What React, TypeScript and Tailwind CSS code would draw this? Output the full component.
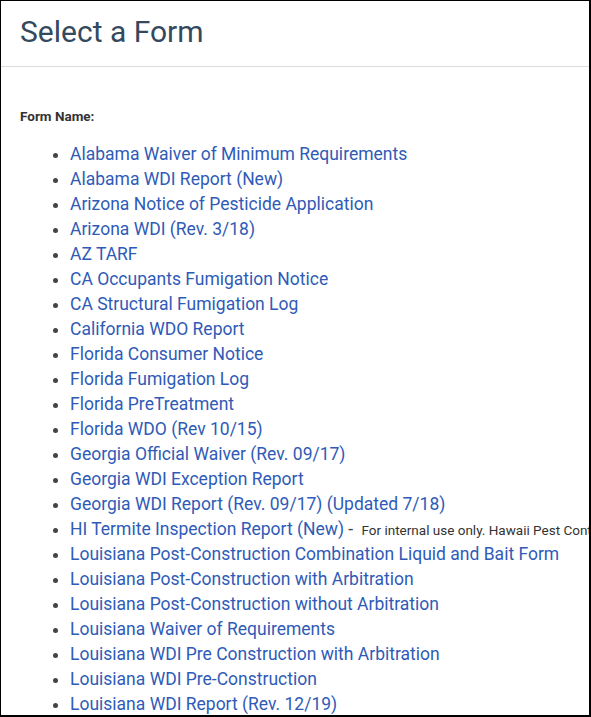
const forms = [
  "Alabama Waiver of Minimum Requirements",
  "Alabama WDI Report (New)",
  "Arizona Notice of Pesticide Application",
  "Arizona WDI (Rev. 3/18)",
  "AZ TARF",
  "CA Occupants Fumigation Notice",
  "CA Structural Fumigation Log",
  "California WDO Report",
  "Florida Consumer Notice",
  "Florida Fumigation Log",
  "Florida PreTreatment",
  "Florida WDO (Rev 10/15)",
  "Georgia Official Waiver (Rev. 09/17)",
  "Georgia WDI Exception Report",
  "Georgia WDI Report (Rev. 09/17) (Updated 7/18)",
  "HI Termite Inspection Report (New)",
  "Louisiana Post-Construction Combination Liquid and Bait Form",
  "Louisiana Post-Construction with Arbitration",
  "Louisiana Post-Construction without Arbitration",
  "Louisiana Waiver of Requirements",
  "Louisiana WDI Pre Construction with Arbitration",
  "Louisiana WDI Pre-Construction",
  "Louisiana WDI Report (Rev. 12/19)",
];

const notes: Record<string, string> = {
  "HI Termite Inspection Report (New)":
    "For internal use only. Hawaii Pest Control Association members only.",
};

export default function App() {
  return (
    <div className="h-[717px] w-[591px] overflow-hidden border-t border-l border-r-2 border-b-2 border-black bg-white font-['Roboto',sans-serif]">
      <div className="flex h-[66px] items-center border-b border-[#dcdcdc] px-[19px] pb-[4px]">
        <h1 className="text-[30px] font-normal text-[#34495e]">Select a Form</h1>
      </div>

      <div className="px-[19px] pt-[40px]">
        <div className="text-[13.5px] font-bold leading-[18px] text-[#333]">Form Name:</div>
        <ul className="mt-[17px] list-disc pl-[50px] text-[17.5px] leading-[25px] text-[#444] marker:text-[#444]">
          {forms.map((name) => (
            <li key={name} className="h-[25px] whitespace-nowrap">
              <a href="#" className="text-[#2f5bb7] hover:underline">
                {name}
              </a>
              {notes[name] && (
                <>
                  <span className="text-[#444]"> - </span>
                  <span className="ml-[4px] text-[13.5px] leading-none text-[#333]">{notes[name]}</span>
                </>
              )}
            </li>
          ))}
        </ul>
      </div>
    </div>
  );
}
